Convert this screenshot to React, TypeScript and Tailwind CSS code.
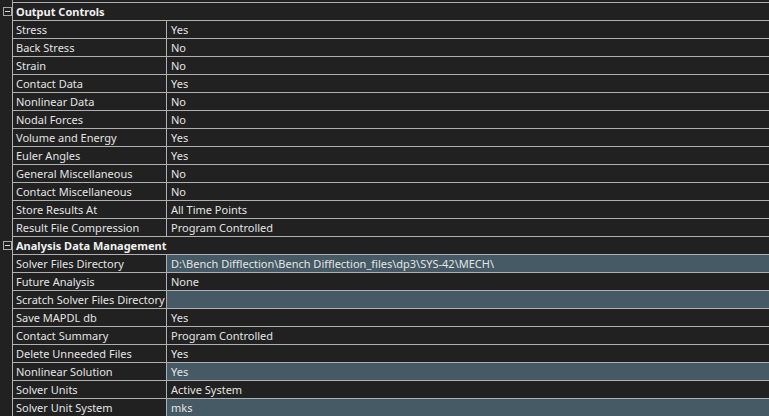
type Row =
  | { kind: "group"; label: string }
  | { kind: "prop"; label: string; value: string; hl?: boolean }

const ROWS: Row[] = [
  { kind: "group", label: "Output Controls" },
  { kind: "prop", label: "Stress", value: "Yes" },
  { kind: "prop", label: "Back Stress", value: "No" },
  { kind: "prop", label: "Strain", value: "No" },
  { kind: "prop", label: "Contact Data", value: "Yes" },
  { kind: "prop", label: "Nonlinear Data", value: "No" },
  { kind: "prop", label: "Nodal Forces", value: "No" },
  { kind: "prop", label: "Volume and Energy", value: "Yes" },
  { kind: "prop", label: "Euler Angles", value: "Yes" },
  { kind: "prop", label: "General Miscellaneous", value: "No" },
  { kind: "prop", label: "Contact Miscellaneous", value: "No" },
  { kind: "prop", label: "Store Results At", value: "All Time Points" },
  { kind: "prop", label: "Result File Compression", value: "Program Controlled" },
  { kind: "group", label: "Analysis Data Management" },
  {
    kind: "prop",
    label: "Solver Files Directory",
    value: "D:\\Bench Difflection\\Bench Difflection_files\\dp3\\SYS-42\\MECH\\",
    hl: true,
  },
  { kind: "prop", label: "Future Analysis", value: "None" },
  { kind: "prop", label: "Scratch Solver Files Directory", value: "", hl: true },
  { kind: "prop", label: "Save MAPDL db", value: "Yes" },
  { kind: "prop", label: "Contact Summary", value: "Program Controlled" },
  { kind: "prop", label: "Delete Unneeded Files", value: "Yes" },
  { kind: "prop", label: "Nonlinear Solution", value: "Yes", hl: true },
  { kind: "prop", label: "Solver Units", value: "Active System" },
  { kind: "prop", label: "Solver Unit System", value: "mks", hl: true },
]

const MinusBox = () => (
  <span className="absolute left-[3px] top-[5px] flex h-[9px] w-[9px] items-center justify-center border border-[#a8a8a8]">
    <span className="h-px w-[5px] bg-[#d8d8d8]" />
  </span>
)

export default function App() {
  return (
    <div
      className="h-[416px] w-[769px] overflow-hidden bg-[#212121] text-[11px] leading-none text-[#e4e4e4]"
      style={{ fontFamily: '"Noto Sans", "Open Sans", sans-serif' }}
    >
      <div className="flex h-[2px]">
        <div className="w-[12px] shrink-0" />
        <div className="flex-1 border-l border-[#a0a0a0]" />
      </div>
      {ROWS.map((row) => (
        <div key={row.label} className="flex h-[18px]">
          <div className="relative w-[12px] shrink-0">
            {row.kind === "group" && <MinusBox />}
          </div>
          {row.kind === "group" ? (
            <div className="flex flex-1 items-center border-l border-t border-[#b0b0b0] pl-[3px] font-bold text-[#f0f0f0]">
              {row.label}
            </div>
          ) : (
            <div className="flex flex-1 border-l border-t border-[#b0b0b0]">
              <div className="flex w-[153px] shrink-0 items-center whitespace-nowrap pl-[3px]">
                {row.label}
              </div>
              <div
                className={`flex flex-1 items-center whitespace-nowrap border-l border-[#b0b0b0] pl-[4px] ${
                  row.hl ? "bg-[#465a65]" : ""
                }`}
              >
                {row.value}
              </div>
            </div>
          )}
        </div>
      ))}
    </div>
  )
}
